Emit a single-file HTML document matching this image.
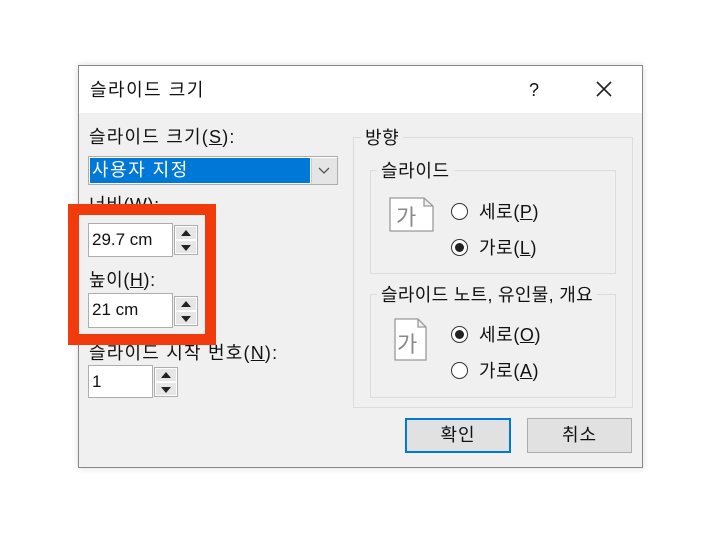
<!DOCTYPE html>
<html><head><meta charset="utf-8"><style>
*{box-sizing:border-box;margin:0;padding:0}
body{width:720px;height:538px;background:#fff;position:relative;overflow:hidden;font-family:"Liberation Sans","Noto Sans CJK KR",sans-serif;color:#111}
.a{position:absolute}
.dlg{left:78px;top:65px;width:565px;height:403px;border:1px solid #888;background:#f0f0f0;box-shadow:0 0 6px rgba(0,0,0,.15)}
.tb{left:79px;top:66px;width:563px;height:47px;background:#fff}
.t{font-size:18px;line-height:22px;white-space:nowrap;letter-spacing:0.6px}
.inp{background:#fff;border:1px solid #adadad;font-size:17px;line-height:32px;padding-left:3px}
.sp{border:1px solid #adadad;background:#e8e8e8}
.sp div{position:absolute;left:0;width:100%;height:50%;border:1px solid #fff;background:#e6e6e6}
.up::after,.dn::after{content:"";position:absolute;left:50%;margin-left:-5px;border-left:5px solid transparent;border-right:5px solid transparent}
.up::after{top:3px;border-bottom:6px solid #222}
.dn::after{top:4px;border-top:6px solid #222}
.grp{border:1px solid #dcdcdc}
.lb{background:#f0f0f0;padding:0 4px}
.r{width:17px;height:17px;border:1px solid #333;border-radius:50%;background:#fff}
.r.on::after{content:"";position:absolute;left:3px;top:3px;width:9px;height:9px;border-radius:50%;background:#222}
.btn{background:#e1e1e1;border:1px solid #adadad;font-size:18px;text-align:center;line-height:32px;letter-spacing:1px}
u{text-decoration:underline}
</style></head><body>
<div class="a dlg"></div>
<div class="a tb"></div>
<div class="a t" style="left:90px;top:79px;letter-spacing:1.5px">슬라이드 크기</div>
<div class="a t" style="left:529px;top:79px;font-size:18px">?</div>
<svg class="a" style="left:596px;top:81px" width="16" height="16"><path d="M1 1L15 15M15 1L1 15" stroke="#222" stroke-width="1.6"/></svg>

<div class="a t" style="left:89px;top:126px;letter-spacing:1.2px">슬라이드 크기(<u>S</u>):</div>
<div class="a" style="left:88px;top:156px;width:250px;height:29px;border:1px solid #adadad;background:#fff"></div>
<div class="a t" style="left:90px;top:158px;width:220px;height:25px;background:#0078d7;color:#fff;padding-left:2px;line-height:25px;letter-spacing:1.5px">사용자 지정</div>
<div class="a" style="left:311px;top:158px;width:26px;height:26px;background:#e5e5e5;border-left:1px solid #ccc"></div>
<svg class="a" style="left:317px;top:166px" width="14" height="10"><path d="M2 2L7 7L12 2" stroke="#555" fill="none" stroke-width="1.3"/></svg>

<div class="a t" style="left:89px;top:194px">너비(<u>W</u>):</div>
<div class="a inp" style="left:88px;top:223px;width:85px;height:34px">29.7 cm</div>
<div class="a sp" style="left:174px;top:225px;width:24px;height:30px"><div class="up" style="top:0"></div><div class="dn" style="top:50%"></div></div>
<div class="a t" style="left:89px;top:269px">높이(<u>H</u>):</div>
<div class="a inp" style="left:88px;top:293px;width:85px;height:35px">21 cm</div>
<div class="a sp" style="left:174px;top:296px;width:24px;height:30px"><div class="up" style="top:0"></div><div class="dn" style="top:50%"></div></div>
<div class="a t" style="left:89px;top:342px;letter-spacing:1.2px">슬라이드 시작 번호(<u>N</u>):</div>
<div class="a inp" style="left:88px;top:365px;width:65px;height:33px">1</div>
<div class="a sp" style="left:154px;top:367px;width:24px;height:30px"><div class="up" style="top:0"></div><div class="dn" style="top:50%"></div></div>

<div class="a" style="left:68px;top:204px;width:148px;height:141px;border:11px solid #f23b0c"></div>

<div class="a grp" style="left:353px;top:137px;width:280px;height:271px"></div>
<div class="a t lb" style="left:361px;top:127px">방향</div>
<div class="a grp" style="left:370px;top:170px;width:246px;height:104px"></div>
<div class="a t lb" style="left:377px;top:160px">슬라이드</div>
<svg class="a" style="left:389px;top:197px" width="46" height="36"><path d="M1 1H35L44 9V34H1Z M35 1V9H44" fill="#fff" stroke="#9a9a9a" stroke-width="1.3"/><text x="7" y="28" font-size="22" fill="#8a8a8a" font-family="Noto Sans CJK KR">가</text></svg>
<div class="a r" style="left:451px;top:203px"></div>
<div class="a t" style="left:479px;top:201px">세로(<u>P</u>)</div>
<div class="a r on" style="left:451px;top:239px"></div>
<div class="a t" style="left:479px;top:237px">가로(<u>L</u>)</div>

<div class="a grp" style="left:370px;top:294px;width:246px;height:104px"></div>
<div class="a t lb" style="left:377px;top:284px;letter-spacing:0.3px">슬라이드 노트, 유인물, 개요</div>
<svg class="a" style="left:394px;top:318px" width="34" height="44"><path d="M1 1H24L32 9V42H1Z M24 1V9H32" fill="#fff" stroke="#9a9a9a" stroke-width="1.3"/><text x="3" y="34" font-size="22" fill="#8a8a8a" font-family="Noto Sans CJK KR">가</text></svg>
<div class="a r on" style="left:451px;top:326px"></div>
<div class="a t" style="left:479px;top:324px">세로(<u>O</u>)</div>
<div class="a r" style="left:451px;top:362px"></div>
<div class="a t" style="left:479px;top:360px">가로(<u>A</u>)</div>

<div class="a btn" style="left:405px;top:418px;width:106px;height:35px;border:2px solid #0078d7;line-height:31px">확인</div>
<div class="a btn" style="left:527px;top:418px;width:105px;height:35px">취소</div>
</body></html>
